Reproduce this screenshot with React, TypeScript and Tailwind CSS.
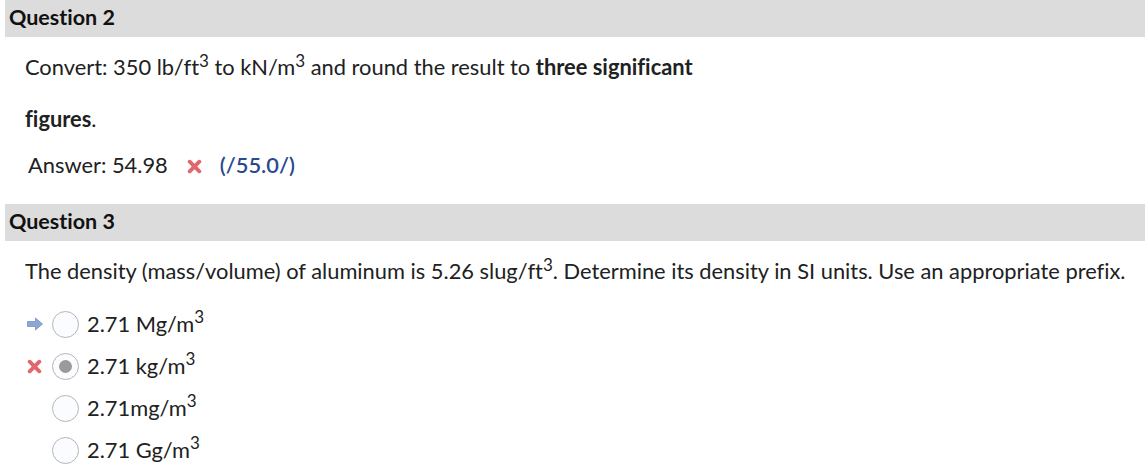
import React from "react";

const XMark = ({ className = "" }: { className?: string }) => (
  <svg viewBox="0 0 14 14" className={className}>
    <path d="M2.5 2.5 L11.5 11.5 M11.5 2.5 L2.5 11.5" stroke="#e0676b" strokeWidth="3.6" strokeLinecap="round" />
  </svg>
);

const Arrow = () => (
  <svg viewBox="0 0 16 14" className="w-[16px] h-[14px]">
    <path d="M0.5 4.5 H8.5 V1 L15.5 7 L8.5 13 V9.5 H0.5 Z" fill="#8ea6d4" stroke="#7590c4" strokeWidth="0.8" strokeLinejoin="round" />
  </svg>
);

const Sup = ({ children }: { children: React.ReactNode }) => <sup className="text-[17px]">{children}</sup>;

const options = [
  { label: "2.71 Mg/m", mark: "arrow", checked: false },
  { label: "2.71 kg/m", mark: "x", checked: true },
  { label: "2.71mg/m", mark: "", checked: false },
  { label: "2.71 Gg/m", mark: "", checked: false },
];

export default function App() {
  return (
    <div
      className="w-[1145px] h-[470px] bg-white text-[#202122] overflow-hidden [font-variant-ligatures:none]"
      style={{ fontFamily: "Lato, 'Open Sans', sans-serif" }}
    >
      {/* Question 2 */}
      <div className="ml-[5px] h-[37px] bg-[#dcdcdc] flex items-center pl-[4px] pb-[2px]">
        <h2 className="text-[21.5px] font-bold text-[#111]">Question 2</h2>
      </div>
      <div className="pl-[25px] pt-[4px]">
        <p className="text-[21.85px] leading-[52px] w-[700px]">
          Convert: 350 lb/ft<Sup>3</Sup> to kN/m<Sup>3</Sup> and round the result to <b>three significant figures</b>.
        </p>
        <div className="flex items-center pl-[3px] h-[36px] mt-[2px] text-[21.85px]">
          <span>Answer: 54.98</span>
          <XMark className="w-[15px] h-[15px] ml-[19px] mt-[2px]" />
          <span className="ml-[18px] text-[#2b4a8e] font-semibold">(/55.0/)</span>
        </div>
      </div>

      {/* Question 3 */}
      <div className="ml-[5px] mt-[21px] h-[37px] bg-[#dcdcdc] flex items-center pl-[4px] pb-[2px]">
        <h2 className="text-[21.5px] font-bold text-[#111]">Question 3</h2>
      </div>
      <div className="pl-[25px] pt-[13px]">
        <p className="text-[21.85px] leading-[34px]">
          The density (mass/volume) of aluminum is 5.26 slug/ft<Sup>3</Sup>. Determine its density in SI units. Use an
          appropriate prefix.
        </p>
        <div className="mt-[15px] flex flex-col">
          {options.map((o) => (
            <div key={o.label} className="flex items-center h-[42px]">
              <div className="w-[27px] flex items-center justify-start pl-[2px]">
                {o.mark === "arrow" && <Arrow />}
                {o.mark === "x" && <XMark className="w-[15px] h-[15px]" />}
              </div>
              <div className="w-[27px] h-[27px] rounded-full border border-[#b5b5b5] bg-[#fafcff] flex items-center justify-center">
                {o.checked && <div className="w-[13px] h-[13px] rounded-full bg-[#9a9a9a]" />}
              </div>
              <span className="ml-[8px] text-[21.85px]">
                {o.label}
                <Sup>3</Sup>
              </span>
            </div>
          ))}
        </div>
      </div>
    </div>
  );
}
